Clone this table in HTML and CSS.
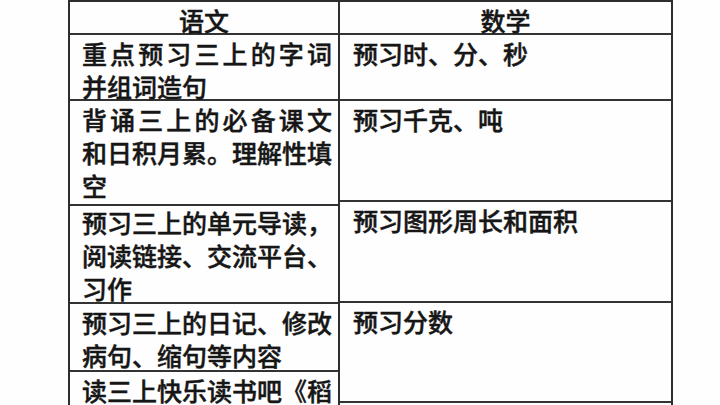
FILE: index.html
```html
<!DOCTYPE html>
<html lang="zh-CN">
<head>
<meta charset="utf-8">
<title>预习计划</title>
<link rel="stylesheet" href="styles.css">
</head>
<body>
<div class="page">
  <div class="col col-lang">
    <div class="cell head">语文</div>
    <div class="cell r1">
      <div class="ln full">重点预习三上的字词</div>
      <div class="ln">并组词造句</div>
    </div>
    <div class="cell r2">
      <div class="ln full">背诵三上的必备课文</div>
      <div class="ln full">和日积月累。理解性填</div>
      <div class="ln">空</div>
    </div>
    <div class="cell r3">
      <div class="ln full">预习三上的单元导读，</div>
      <div class="ln full">阅读链接、交流平台、</div>
      <div class="ln">习作</div>
    </div>
    <div class="cell r4">
      <div class="ln full">预习三上的日记、修改</div>
      <div class="ln">病句、缩句等内容</div>
    </div>
    <div class="cell r5">
      <div class="ln full">读三上快乐读书吧《稻</div>
    </div>
  </div>
  <div class="col col-math">
    <div class="cell head">数学</div>
    <div class="cell m1"><div class="ln">预习时、分、秒</div></div>
    <div class="cell m2"><div class="ln">预习千克、吨</div></div>
    <div class="cell m3"><div class="ln">预习图形周长和面积</div></div>
    <div class="cell m4"><div class="ln">预习分数</div></div>
    <div class="cell m5"></div>
  </div>
</div>
</body>
</html>
```

FILE: styles.css
```css
* {
  box-sizing: border-box;
}

html,
body {
  margin: 0;
  padding: 0;
  background: #ffffff;
}

body {
  font-family: "Noto Sans CJK SC", "Noto Sans", sans-serif;
  color: #161616;
}

.page {
  display: flex;
  height: 405px;
  overflow: hidden;
  padding-left: 68px;
  background: #fefefe;
}

.col {
  display: flex;
  flex-direction: column;
  border-top: 2px solid #2e2e2e;
  border-left: 2px solid #2e2e2e;
}

.col-lang {
  width: 270px;
}

.col-math {
  width: 335px;
  border-right: 2px solid #2e2e2e;
}

.cell {
  flex: none;
  border-bottom: 2px solid #333333;
  padding: 2px 6px 0 12px;
  font-size: 25px;
  line-height: 33px;
  font-weight: 500;
  -webkit-text-stroke: 0.45px #161616;
}

.col-math .cell {
  padding-left: 13px;
}

.head {
  height: 33px;
  text-align: center;
  padding-left: 0;
  padding-right: 0;
}

.col-math .head {
  padding-left: 0;
}

.ln {
  white-space: nowrap;
}

.full {
  text-align: justify;
  text-align-last: justify;
}

.r1 { height: 66px; }
.r2 { height: 105px; }
.r3 { height: 98px; padding-top: 0; }
.r4 { height: 68px; }
.r5 {
  height: 32px;
  padding-top: 4px;
  line-height: 28px;
  border-bottom: none;
}

.m1 { height: 66px; }
.m2 { height: 101px; }
.m3 { height: 101px; }
.m4 { height: 100px; }
.m5 { height: 4px; border-bottom: none; }
```
